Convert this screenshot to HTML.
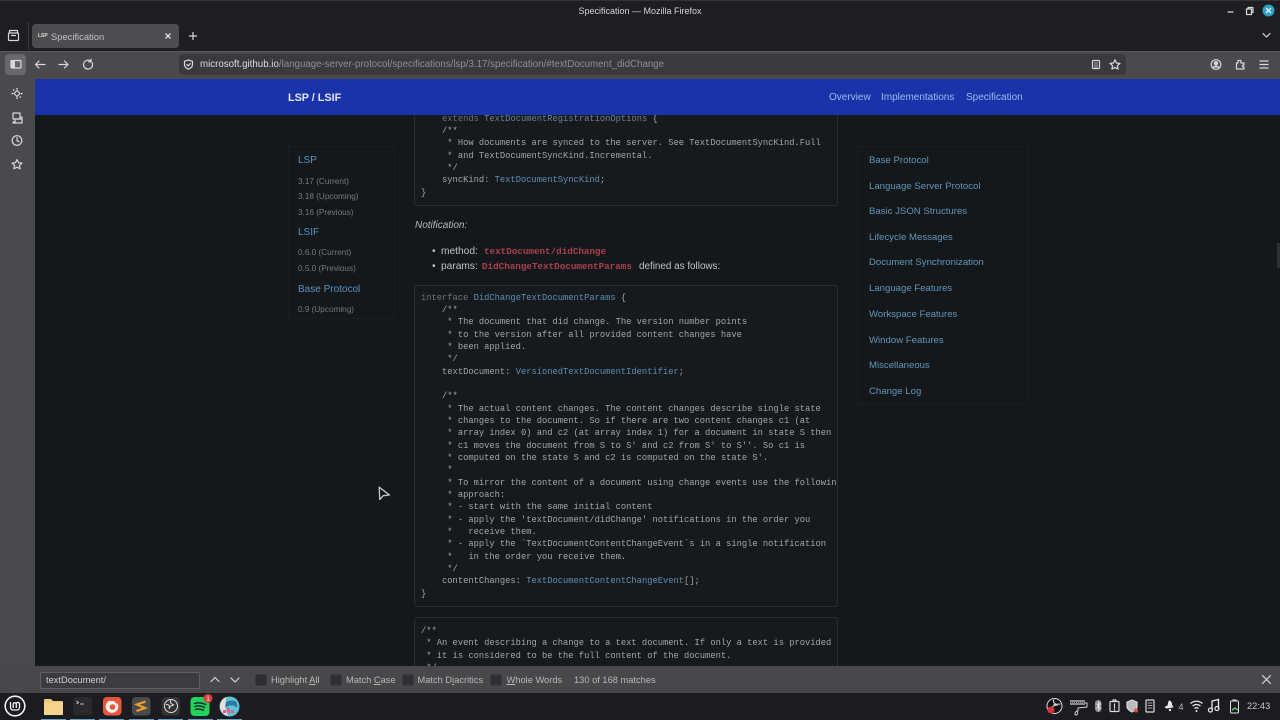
<!DOCTYPE html>
<html><head><meta charset="utf-8"><title>Specification — Mozilla Firefox</title>
<style>
html,body{margin:0;padding:0;width:1280px;height:720px;overflow:hidden;background:#15181b;font-family:"Liberation Sans",sans-serif}
#w{position:absolute;left:0;top:0;width:1280px;height:720px;overflow:hidden;filter:blur(.35px)}
.a{position:absolute;white-space:nowrap}
svg{position:absolute;overflow:visible}
.s{fill:none;stroke:#d8d8da;stroke-width:1.2;stroke-linecap:round;stroke-linejoin:round}
.box{position:absolute;left:414px;width:422px;border:1px solid #2b2f33;border-radius:3px;background:#171a1d;box-sizing:content-box}
pre{position:absolute;margin:0;left:421px;width:415px;overflow:hidden;font:8.77px/12.35px "Liberation Mono",monospace;color:#a3a6a8}
pre b{font-weight:normal;color:#5f8db5}
pre i{font-style:normal;color:#6f6f7c}
.side{font-size:10px;color:#5b92bd;left:298px}
.ver{font-size:8.2px;color:#737a80;left:298px}
.toc{font-size:9.6px;color:#6195b8;left:869px}
.ft{font-size:9.3px;color:#b8b8ba;top:675px}
.cb{position:absolute;top:674px;width:10px;height:10px;background:#2f2f33;border-radius:2px;border:1px solid #3a3a3e}
.ul{position:absolute;top:718.5px;height:1.5px;background:#6a9fc0;width:25px}
</style></head><body><div id="w">
<!-- main content -->
<div class="box" style="top:100px;height:104px"></div>
<pre style="top:112.5px"><i>    extends</i> <b style="color:#6d8397">TextDocumentRegistrationOptions</b> {
    /**
     * How documents are synced to the server. See TextDocumentSyncKind.Full
     * and TextDocumentSyncKind.Incremental.
     */
    syncKind: <b>TextDocumentSyncKind</b>;
}</pre>
<div class="a" style="left:415px;top:219.5px;font-size:10px;font-style:italic;color:#b8babc">Notification:</div>
<div class="a" style="left:432px;top:245.5px;font-size:10.2px;color:#c0c2c4">•</div>
<div class="a" style="left:441px;top:245.5px;font-size:10.2px;color:#c0c2c4">method:</div>
<div class="a" style="left:484px;top:245.5px;font:bold 9.25px/12px 'Liberation Mono',monospace;color:#a8404e">textDocument/didChange</div>
<div class="a" style="left:432px;top:261px;font-size:10.2px;color:#c0c2c4">•</div>
<div class="a" style="left:441px;top:261px;font-size:10.2px;color:#c0c2c4">params:</div>
<div class="a" style="left:482px;top:261px;font:bold 9.25px/12px 'Liberation Mono',monospace;color:#a8404e">DidChangeTextDocumentParams</div>
<div class="a" style="left:639px;top:261px;font-size:9.9px;color:#c0c2c4">defined as follows:</div>
<div class="box" style="top:285px;height:320px"></div>
<pre style="top:291.5px"><i>interface</i> <b>DidChangeTextDocumentParams</b> {
    /**
     * The document that did change. The version number points
     * to the version after all provided content changes have
     * been applied.
     */
    textDocument: <b>VersionedTextDocumentIdentifier</b>;

    /**
     * The actual content changes. The content changes describe single state
     * changes to the document. So if there are two content changes c1 (at
     * array index 0) and c2 (at array index 1) for a document in state S then
     * c1 moves the document from S to S' and c2 from S' to S''. So c1 is
     * computed on the state S and c2 is computed on the state S'.
     *
     * To mirror the content of a document using change events use the following
     * approach:
     * - start with the same initial content
     * - apply the 'textDocument/didChange' notifications in the order you
     *   receive them.
     * - apply the `TextDocumentContentChangeEvent`s in a single notification
     *   in the order you receive them.
     */
    contentChanges: <b>TextDocumentContentChangeEvent</b>[];
}</pre>
<div class="box" style="top:617px;height:70px"></div>
<pre style="top:625px">/**
 * An event describing a change to a text document. If only a text is provided
 * it is considered to be the full content of the document.
 */</pre>
<!-- left nav -->
<div class="a" style="left:288px;top:146px;width:105px;height:171px;border:1px solid #1a1d21"></div>
<div class="a side" style="top:155px">LSP</div>
<div class="a ver" style="top:176.5px">3.17 (Current)</div>
<div class="a ver" style="top:192px">3.18 (Upcoming)</div>
<div class="a ver" style="top:207.5px">3.16 (Previous)</div>
<div class="a side" style="top:227px">LSIF</div>
<div class="a ver" style="top:248px">0.6.0 (Current)</div>
<div class="a ver" style="top:264px">0.5.0 (Previous)</div>
<div class="a side" style="top:284px">Base Protocol</div>
<div class="a ver" style="top:304.5px">0.9 (Upcoming)</div>
<!-- right toc -->
<div class="a" style="left:857px;top:146px;width:169px;height:257px;border:1px solid #1a1d21"></div>
<div class="a toc" style="top:154.5px">Base Protocol</div>
<div class="a toc" style="top:180.5px">Language Server Protocol</div>
<div class="a toc" style="top:205.5px">Basic JSON Structures</div>
<div class="a toc" style="top:231.5px">Lifecycle Messages</div>
<div class="a toc" style="top:257px">Document Synchronization</div>
<div class="a toc" style="top:283px">Language Features</div>
<div class="a toc" style="top:308.5px">Workspace Features</div>
<div class="a toc" style="top:334.5px">Window Features</div>
<div class="a toc" style="top:360px">Miscellaneous</div>
<div class="a toc" style="top:386px">Change Log</div>
<div class="a" style="left:1277px;top:243px;width:3px;height:25px;background:#2e3134"></div>
<!-- cursor -->
<svg style="left:378px;top:486px" width="14" height="16"><path d="M1.200 1.200l.5 12.300 3.500-3.800 6.300-.7z" fill="#15181b" stroke="#c8c8c8" stroke-width="1.300" stroke-linejoin="round"/></svg>
<!-- title bar -->
<div class="a" style="left:0;top:0;width:1280px;height:51px;background:#1e1e22"></div>
<div class="a" style="left:0;top:0;width:1280px;height:1px;background:#333"></div>
<div class="a" style="left:0;width:1280px;top:5.5px;text-align:center;font-size:9px;color:#d4d4d6">Specification — Mozilla Firefox</div>
<svg style="left:0;top:0" width="1280" height="60">
<g class="s"><path d="M1228 12h5"/><rect x="1246.5" y="9" width="5" height="5.5"/><path d="M1248 9V7.500h5v5h-1.500"/></g>
<circle cx="1268.5" cy="10.5" r="6" fill="#2f9ec4"/><path d="M1266 8l5 5M1271 8l-5 5" stroke="#e8f4f8" stroke-width="1.3"/>
<path class="s" d="M1263 33.5l3.500 3.500 3.500-3.500"/>
<g class="s"><rect x="8.5" y="33" width="10" height="7.500" rx="1"/><path d="M9.500 33v-2.500h8V33M11.500 35.500h4"/></g>
<path d="M28.5 22v28" stroke="#3a3a3e"/>
</svg>
<div class="a" style="left:32px;top:24px;width:147px;height:24px;background:#4d4d50;border-radius:4px"></div>
<div class="a" style="left:38px;top:33px;font-size:5px;color:#ddd;font-weight:bold">LSP</div>
<div class="a" style="left:51px;top:31px;font-size:9.4px;color:#c2c2c4">Specification</div>
<svg style="left:0;top:0" width="200" height="50"><path d="M165.500 33.500l5 5M170.500 33.500l-5 5" stroke="#e0e0e2" stroke-width="1.3"/><path class="s" d="M193 32.500v7M189.500 36h7"/></svg>
<!-- toolbar -->
<div class="a" style="left:0;top:51px;width:1280px;height:28px;background:#4a4a4d;border-top:1px solid #5a5a5d;box-sizing:border-box"></div>
<div class="a" style="left:5px;top:54px;width:21px;height:21px;background:#68686b;border-radius:4px"></div>
<div class="a" style="left:179px;top:54px;width:947px;height:21px;background:#3a3a3d;border-radius:4px"></div>
<div class="a" style="left:200px;top:59px;font-size:9.72px;color:#8f8f92"><span style="color:#dcdcde">microsoft.github.io</span>/language-server-protocol/specifications/lsp/3.17/specification/#textDocument_didChange</div>
<svg style="left:0;top:0" width="1280" height="80">
<g class="s">
<rect x="11" y="60.5" width="10" height="7.500" rx="1"/><rect x="11.5" y="61" width="3.500" height="6.500" fill="#d8d8da" stroke="none"/>
<path d="M45 64.500h-9M39 61l-3.500 3.500 3.500 3.500M59 64.500h9M64.500 61l3.500 3.500-3.500 3.500"/>
<path d="M92 62a4.500 4.500 0 1 1-1.300-1.500M91 58.800v2.500h-2.500" transform="translate(0,0.5)"/>
<path d="M188.500 60l4 1.300v3.200c0 2.300-1.800 3.800-4 4.700-2.200-.9-4-2.400-4-4.700v-3.200zM186.800 64.600l1.300 1.300 2.300-2.400"/>
<rect x="1092.5" y="60.5" width="7" height="8" rx=".8"/><path d="M1094.500 63h3M1094.500 65h3M1094.500 67h3" stroke-width=".8"/>
<path d="M1115 59.800l1.500 3.200 3.500.4-2.600 2.300.7 3.400-3.100-1.700-3.100 1.700.7-3.400-2.600-2.300 3.500-.4z"/>
<circle cx="1216" cy="64.5" r="4.800"/><circle cx="1216" cy="63.3" r="1.700" fill="#d8d8da"/><path d="M1213 67.500c1-1.500 5-1.500 6 0" fill="#d8d8da"/>
<path d="M1236.500 69v-6h1.500c0-1 .5-1.500 0-2.500h3v1c-.3.6-.3 1 0 1.500h3v2c-1-.4-1.500.4-1.500 1s.5 1.400 1.500 1V69z"/>
<path d="M1260 61h8M1260 64.500h8M1260 68h8" stroke-width="1.3"/>
</g></svg>
<!-- sidebar -->
<div class="a" style="left:0;top:79px;width:35px;height:587px;background:#4a4a4c"></div>
<svg style="left:0;top:0" width="36" height="700"><g class="s">
<path d="M17 90.500l3 3-3 3-3-3z"/><path d="M17 88.500v.4M17 98v.4M12 93.500h.4M21.600 93.500h.4M13.500 90h.3M20.200 97h.3" stroke-width="1.5"/>
<rect x="13" y="113" width="7" height="6"/><path d="M15 119v3h-2M17 119h5v4h-9M21 117h1v2"/>
<circle cx="17" cy="140.5" r="4.800"/><path d="M17 137.500v3.200l2 1"/>
<path d="M17 159.500l1.500 3.200 3.500.4-2.600 2.300.7 3.400-3.100-1.700-3.100 1.700.7-3.400-2.600-2.300 3.500-.4z"/>
<circle cx="17" cy="678" r="1.700"/><path d="M17 673.200l1.300.4.9 1 1.500-.1.8 1.700-.9 1.200v1.200l.9 1.200-.8 1.700-1.500-.1-.9 1-1.300.4-1.300-.4-.9-1-1.500.1-.8-1.700.9-1.200v-1.200l-.9-1.200.8-1.700 1.500.1.900-1z" stroke-width="1"/>
</g></svg>
<!-- site header -->
<div class="a" style="left:35px;top:79px;width:1245px;height:36px;background:#1b33a9"></div>
<div class="a" style="left:288px;top:91.5px;font-size:10.8px;font-weight:bold;color:#dfe8f8">LSP / LSIF</div>
<div class="a" style="left:829px;top:91.5px;font-size:10px;color:#9db9ef">Overview</div>
<div class="a" style="left:881px;top:91.5px;font-size:10px;color:#9db9ef">Implementations</div>
<div class="a" style="left:966px;top:91.5px;font-size:10px;color:#9db9ef">Specification</div>
<!-- find bar -->
<div class="a" style="left:0;top:666px;width:1280px;height:27px;background:#48484a"></div>
<div class="a" style="left:40px;top:672px;width:158px;height:15px;background:#3c3c3f;border:1px solid #5f5f62;border-radius:2px"></div>
<div class="a" style="left:46px;top:675px;font-size:9.3px;color:#d0d0d2">textDocument/</div>
<svg style="left:0;top:660px" width="1280" height="30"><g class="s"><path d="M211 21.500l4-4 4 4M231 18l4 4 4-4"/><path d="M1262.500 15.500l8 8M1270.500 15.500l-8 8"/></g></svg>
<div class="cb" style="left:255px"></div>
<div class="a ft" style="left:271px">Highlight <u>A</u>ll</div>
<div class="cb" style="left:330px"></div>
<div class="a ft" style="left:346px">Match <u>C</u>ase</div>
<div class="cb" style="left:402px"></div>
<div class="a ft" style="left:417.5px">Match D<u>i</u>acritics</div>
<div class="cb" style="left:490px"></div>
<div class="a ft" style="left:506.5px"><u>W</u>hole Words</div>
<div class="a ft" style="left:574px">130 of 168 matches</div>
<!-- taskbar -->
<div class="a" style="left:0;top:693px;width:1280px;height:27px;background:#1c1c20"></div>
<svg style="left:0;top:693px" width="240" height="27">
<circle cx="15" cy="13" r="9.800" fill="#1c1c20" stroke="#f0f0f0" stroke-width="1.6"/>
<path d="M10.500 9v5.500a2.500 2.500 0 0 0 2.500 2.500h4a2.500 2.500 0 0 0 2.500-2.500V11a1.600 1.600 0 0 0-3.200 0v4M13.200 15v-4a1.600 1.600 0 0 1 3.100 0" fill="none" stroke="#f0f0f0" stroke-width="1.3"/>
<path d="M44 7a1 1 0 0 1 1-1h6l2 2h9a1 1 0 0 1 1 1v12a1 1 0 0 1-1 1H45a1 1 0 0 1-1-1z" fill="#f0c878"/><rect x="44" y="9.5" width="19" height="12.500" rx="1" fill="#f5d48c"/>
<rect x="73" y="4" width="19" height="18" rx="3" fill="#2a2a2c"/><path d="M76.500 8l2 1.500-2 1.500" fill="none" stroke="#ddd" stroke-width=".8"/><path d="M80 11h4" stroke="#ddd" stroke-width=".8"/>
<rect x="103" y="4" width="18.500" height="18.500" rx="4" fill="#e4573c"/>
<circle cx="112" cy="13.500" r="6.300" fill="#f4f0ee"/><circle cx="112.500" cy="14" r="2.800" fill="#e4573c"/><path d="M110 7.500c3-1 6 0 7 3" fill="none" stroke="#e4573c" stroke-width="1.5"/>
<rect x="132" y="4" width="18.500" height="18.500" rx="3.500" fill="#4a4a4c"/><path d="M145.500 8.500l-8.500 3 8 3.500-8.500 3" fill="none" stroke="#f0a020" stroke-width="2.2"/>
<rect x="161.500" y="4" width="18.500" height="18.500" rx="4" fill="#343436"/><circle cx="171" cy="13" r="6.500" fill="#343436" stroke="#ddd" stroke-width="1"/><path d="M171 7c-2 3 1 4 3 5-2 0-4 1-5 4 1-3 0-5-3-4.500" fill="none" stroke="#ddd" stroke-width="1"/>
<rect x="190.500" y="4" width="19" height="19" rx="4" fill="#22d05a"/><path d="M194.500 10.500c4-1.200 7.500-.8 11 1M195 13.500c3.500-1 6.500-.6 9.500 1M195.500 16.500c3-.8 5.500-.4 8 .8" fill="none" stroke="#123" stroke-width="1.4" stroke-linecap="round"/>
<circle cx="208" cy="5.500" r="4.500" fill="#d8423c"/><text x="208" y="7.800" text-anchor="middle" font-size="6.5" fill="#fff" font-family="Liberation Sans">1</text>
<circle cx="229.500" cy="13.500" r="10" fill="#5fc4d4"/><path d="M220 13a10 10 0 0 1 6-9l-1 10 3 9a10 10 0 0 1-8-10z" fill="#e8e0d8"/><path d="M226 9c3-2 8-2 10.500 0l1 4.500c-1 1.500-2.500 0-3.500-1h-5c-1 1-2.500 2-3.500 1z" fill="#2f78a8"/><rect x="223" y="17" width="3" height="3" fill="#d4608e"/><rect x="227" y="15" width="3" height="5" fill="#d4608e"/><rect x="231" y="17" width="3" height="3" fill="#d4608e"/>
</svg>
<div class="ul" style="left:41px"></div><div class="ul" style="left:70px"></div><div class="ul" style="left:99px"></div><div class="ul" style="left:129px"></div><div class="ul" style="left:158px"></div><div class="ul" style="left:188px"></div><div class="ul" style="left:217px"></div>
<svg style="left:1040px;top:693px" width="200" height="27">
<circle cx="14.500" cy="13" r="7.500" fill="#111" stroke="#ddd" stroke-width="1"/><path d="M14 6.500c-2 3 1 4 3 5.500-2 0-5 1-5.500 4M20.500 11c-3 0-5 0-7 1" fill="none" stroke="#ddd"/><circle cx="11" cy="17" r="3.500" fill="#d8323c"/>
<rect x="30" y="7" width="15" height="5" fill="#8a8a8c"/><path d="M31 9.500h13" stroke="#333" stroke-dasharray="1 1"/><path d="M45 10h2v4l-9 1v3" fill="none" stroke="#ccc"/><path d="M36.500 18c-2 2-2 4-.5 4s2-2 1.500-4z" fill="none" stroke="#ccc"/>
<rect x="55" y="7" width="6.500" height="12" rx="3.200" fill="#8f8f92"/><path d="M56.500 10.500l4 4.500-2 2v-8l2 2-4 4.500" fill="none" stroke="#eee" stroke-width=".8"/>
<g class="s"><rect x="70" y="8.500" width="9" height="10" rx="1"/><path d="M74.500 11v4M74.500 16.500v.5M73 8.500V7h3v1.500"/>
<path d="M87 9l5-2 5 2v4.500c0 2.500-2.500 4-5 5.500-2.500-1.500-5-3-5-5.500z" fill="#bbb"/>
<rect x="106" y="7" width="8" height="12" rx=".8"/><path d="M108 10h4M108 12.500h4M108 15h4" stroke-width=".8"/>
</g><circle cx="96" cy="17.500" r="2" fill="#d0583c"/>
<path d="M129 7.500c2 0 3 2 3 4l1.500 3-7.500 1-1.500-1.500 3-1.500c.5-2 .5-3.500 1.500-5z" fill="#e8e8ea"/><circle cx="130" cy="17" r="1.200" fill="#e8e8ea"/>
<text x="141" y="17" font-size="9" fill="#b8b8ba" text-anchor="middle" font-family="Liberation Sans">4</text>
<path d="M150.500 10.500c3.500-3 8.500-3 12 0M152.500 13c2.500-2 5.500-2 8 0M154.500 15.500c1.200-1 2.800-1 4 0" fill="none" stroke="#e8e8ea" stroke-width="1.3"/><circle cx="156.500" cy="18" r="1" fill="#e8e8ea"/>
<path d="M172 17V8l6.500-1.500v9" fill="none" stroke="#e8e8ea" stroke-width="1.3"/><circle cx="170.500" cy="17" r="2" fill="none" stroke="#e8e8ea" stroke-width="1.2"/><circle cx="177" cy="15.500" r="2" fill="none" stroke="#e8e8ea" stroke-width="1.2"/>
<rect x="190.500" y="8" width="8" height="12" rx="1" fill="none" stroke="#ddd"/><rect x="192.500" y="6.500" width="4" height="1.500" fill="#ddd"/><path d="M192 17l3-2 3 2" stroke="#5fc46a" fill="none" stroke-width="1.5"/>
</svg>
<div class="a" style="left:1247px;top:701px;font-size:9.3px;color:#c8c8ca">22:43</div>
</div></body></html>
